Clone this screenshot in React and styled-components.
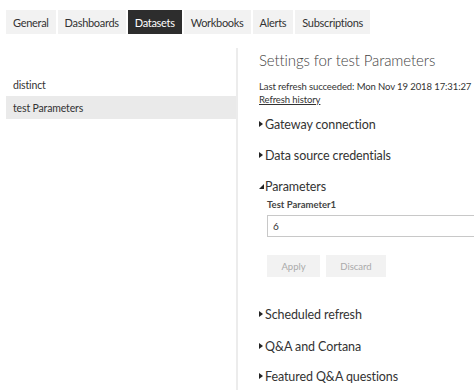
import React from "react";
import styled, { createGlobalStyle } from "styled-components";

const Global = createGlobalStyle`
  html, body { margin: 0; padding: 0; background: #fff; }
  body { font-family: Lato, "Open Sans", sans-serif; color: #333; }
  * { box-sizing: border-box; }
`;

const Page = styled.div`
  width: 474px;
  height: 390px;
  overflow: hidden;
  display: flex;
  flex-direction: column;
`;

const Tabs = styled.div`
  display: flex;
  gap: 2px;
  padding: 10px 0 0 6px;
`;

const Tab = styled.div`
  height: 24px;
  padding: 0 7px;
  display: flex;
  align-items: center;
  font-size: 11px;
  letter-spacing: -0.3px;
  background: ${(p) => (p.$active ? "#2d2d2d" : "#f2f2f2")};
  color: ${(p) => (p.$active ? "#fff" : "#333")};
`;

const Main = styled.div`
  display: flex;
  flex: 1;
  margin-top: 14px;
`;

const Left = styled.div`
  width: 238px;
  padding: 25px 0 0 6px;
  border-right: 2px solid #ececec;
`;

const Item = styled.div`
  height: 23px;
  display: flex;
  align-items: center;
  padding-left: 7px;
  font-size: 10.5px;
  letter-spacing: -0.15px;
  background: ${(p) => (p.$selected ? "#eaeaea" : "transparent")};
`;

const Right = styled.div`
  flex: 1;
  padding: 1px 0 0 21px;
  min-width: 0;
`;

const Title = styled.div`
  font-size: 15px;
  font-weight: 300;
  line-height: 22px;
  color: #444;
  letter-spacing: -0.1px;
`;

const Meta = styled.div`
  margin-top: 9px;
  font-size: 9.5px;
  line-height: 13px;
  color: #333;
  white-space: nowrap;
  letter-spacing: -0.1px;
`;

const Link = styled.div`
  font-size: 9.5px;
  line-height: 13px;
  text-decoration: underline;
  color: #333;
  letter-spacing: -0.1px;
`;

const Sections = styled.div`
  margin-top: 8px;
  display: flex;
  flex-direction: column;
`;

const Header = styled.div`
  height: 20px;
  margin-top: ${(p) => p.$gap}px;
  margin-left: -1px;
  display: flex;
  align-items: center;
  font-size: 12.5px;
  letter-spacing: -0.1px;
  color: #333;
  white-space: nowrap;
`;

const Caret = styled.svg`
  width: 6px;
  height: 8px;
  margin-right: 1px;
  flex: none;
`;

const Body = styled.div`
  padding-left: 8px;
  display: flex;
  flex-direction: column;
`;

const Label = styled.div`
  margin-top: 2px;
  font-size: 9.5px;
  line-height: 14px;
  font-weight: 700;
  color: #444;
`;

const Input = styled.div`
  margin-top: 3px;
  height: 22px;
  width: 230px;
  border: 1px solid #c8c8c8;
  display: flex;
  align-items: center;
  padding-left: 5px;
  font-size: 10px;
  color: #333;
`;

const Buttons = styled.div`
  margin-top: 18px;
  display: flex;
  gap: 6px;
`;

const Button = styled.div`
  height: 22px;
  width: ${(p) => p.$w}px;
  background: #f2f2f2;
  color: #aaa;
  font-size: 9.5px;
  display: flex;
  align-items: center;
  justify-content: center;
`;

function Section({ title, expanded, gap, children }) {
  return (
    <>
      <Header $gap={gap}>
        {expanded ? (
          <Caret viewBox="0 0 6 8">
            <polygon points="6,2 6,7 1,7" fill="#222" />
          </Caret>
        ) : (
          <Caret viewBox="0 0 6 8">
            <polygon points="1,1 5,4 1,7" fill="#222" />
          </Caret>
        )}
        {title}
      </Header>
      {expanded && children}
    </>
  );
}

export default function App() {
  const tabs = ["General", "Dashboards", "Datasets", "Workbooks", "Alerts", "Subscriptions"];
  return (
    <Page>
      <Global />
      <Tabs>
        {tabs.map((t) => (
          <Tab key={t} $active={t === "Datasets"}>{t}</Tab>
        ))}
      </Tabs>
      <Main>
        <Left>
          <Item>distinct</Item>
          <Item $selected>test Parameters</Item>
        </Left>
        <Right>
          <Title>Settings for test Parameters</Title>
          <Meta>Last refresh succeeded: Mon Nov 19 2018 17:31:27</Meta>
          <Link>Refresh history</Link>
          <Sections>
            <Section title="Gateway connection" gap={0} />
            <Section title="Data source credentials" gap={11} />
            <Section title="Parameters" expanded gap={11}>
              <Body>
                <Label>Test Parameter1</Label>
                <Input>6</Input>
                <Buttons>
                  <Button $w={53}>Apply</Button>
                  <Button $w={60}>Discard</Button>
                </Buttons>
              </Body>
            </Section>
            <Section title="Scheduled refresh" gap={27} />
            <Section title="Q&A and Cortana" gap={12} />
            <Section title="Featured Q&A questions" gap={10} />
          </Sections>
        </Right>
      </Main>
    </Page>
  );
}
